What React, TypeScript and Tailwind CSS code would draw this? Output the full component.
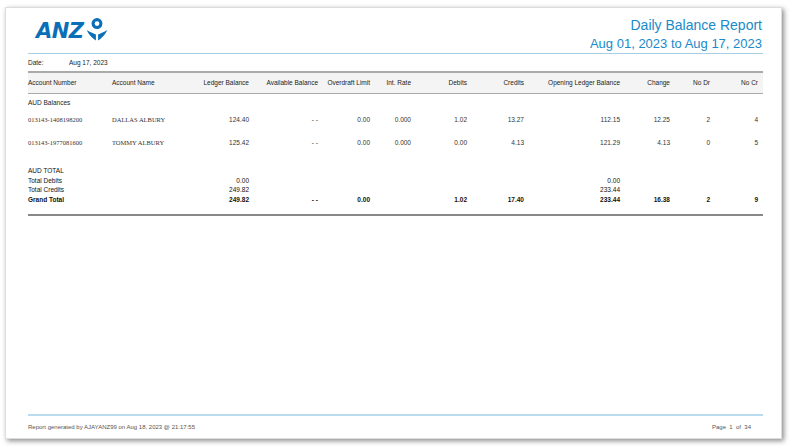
import React from "react";

const W = [84, 79, 58, 69, 52, 41, 56, 57, 96, 50, 40, 48];

function Row({ cells, className = "", first = "" }: { cells: (string | null)[]; className?: string; first?: string }) {
  return (
    <div className={"flex " + className}>
      {cells.map((c, i) => (
        <div
          key={i}
          style={{ width: W[i] }}
          className={"shrink-0 " + (i < 2 ? "text-left " + first : "text-right")}
        >
          {c ?? ""}
        </div>
      ))}
    </div>
  );
}

export default function App() {
  const serif = "font-[Liberation_Serif,serif] text-[6.5px] text-[#333]";
  return (
    <div className="w-[796px] h-[447px] bg-white relative font-[Liberation_Sans,Arial,sans-serif]">
      <div className="absolute left-[5px] top-[7px] w-[777px] h-[432px] bg-white shadow-[2px_2px_5px_rgba(0,0,0,0.45)] border border-[#ddd]">
        <div className="ml-[22px] w-[735px] flex flex-col h-full">
          <div className="flex justify-between items-start h-[46px] border-b border-[#a8cfe6]">
            <div className="mt-[13px] ml-[8px] flex items-center">
              <span className="text-[#0a6fb7] font-black italic text-[21px] tracking-[-0.5px] leading-none font-[DejaVu_Sans,sans-serif]">ANZ</span>
              <svg width="24" height="24" viewBox="0 0 22 22" className="ml-[1px] -mt-[5px]">
                <circle cx="11" cy="6" r="3.6" fill="none" stroke="#0a6fb7" strokeWidth="2.8" />
                <path d="M1.5 12 C4 17 7 20 10 21.5 L10 16 C7 15 5 14 1.5 12Z" fill="#0a6fb7" />
                <path d="M20.5 12 C18 17 15 20 12 21.5 L12 16 C15 15 17 14 20.5 12Z" fill="#0a6fb7" />
              </svg>
            </div>
            <div className="text-right text-[#1a8ac9] mt-[9px] mr-[1px]">
              <div className="text-[14px] leading-[17px]">Daily Balance Report</div>
              <div className="text-[13px] leading-[17px] mt-[1px]">Aug 01, 2023 to Aug 17, 2023</div>
            </div>
          </div>
          <div className="flex items-center h-[17px] text-[6.5px] text-[#222]">
            <span className="w-[41px]">Date:</span>
            <span>Aug 17, 2023</span>
          </div>
          <div className="border-t-2 border-b border-[#aaa] bg-[#f4f4f4] h-[23px] flex items-center text-[6.5px] text-[#222]">
            <Row cells={["Account Number", "Account Name", "Ledger Balance", "Available Balance", "Overdraft Limit", "Int. Rate", "Debits", "Credits", "Opening Ledger Balance", "Change", "No Dr", "No Cr"]} />
          </div>
          <div className="text-[6.5px] text-[#222] mt-[4px] h-[10px]">AUD Balances</div>
          <div className="text-[6.5px] text-[#333] mt-[7px] h-[12px]">
            <Row className="items-end" first={serif + " self-start"} cells={["013143-1408198200", "DALLAS ALBURY", "124.40", "- -", "0.00", "0.000", "1.02", "13.27", "112.15", "12.25", "2", "4"]} />
          </div>
          <div className="text-[6.5px] text-[#333] mt-[11px] h-[12px]">
            <Row className="items-end" first={serif + " self-start"} cells={["013143-1977081600", "TOMMY ALBURY", "125.42", "- -", "0.00", "0.000", "0.00", "4.13", "121.29", "4.13", "0", "5"]} />
          </div>
          <div className="text-[6.5px] text-[#111] mt-[16px] leading-[9.5px]">
            <Row cells={["AUD TOTAL", null]} />
            <Row cells={["Total Debits", null, "0.00", null, null, null, null, null, "0.00 "]} />
            <Row cells={["Total Credits", null, "249.82", null, null, null, null, null, "233.44 "]} />
            <Row className="font-bold" cells={["Grand Total", null, "249.82", "- -", "0.00", null, "1.02", "17.40", "233.44 ", "16.38", "2", "9"]} />
          </div>
          <div className="border-t-2 border-[#888] mt-[10px]" />
          <div className="flex-1" />
          <div className="border-t-2 border-[#b9dcee] h-[24px] flex items-center justify-between text-[6px] text-[#555]">
            <span>Report generated by AJAYANZ99 on Aug 18, 2023 @ 21:17:55</span>
            <span className="mr-[12px]">Page&nbsp; 1 &nbsp;of&nbsp; 34</span>
          </div>
        </div>
      </div>
    </div>
  );
}
